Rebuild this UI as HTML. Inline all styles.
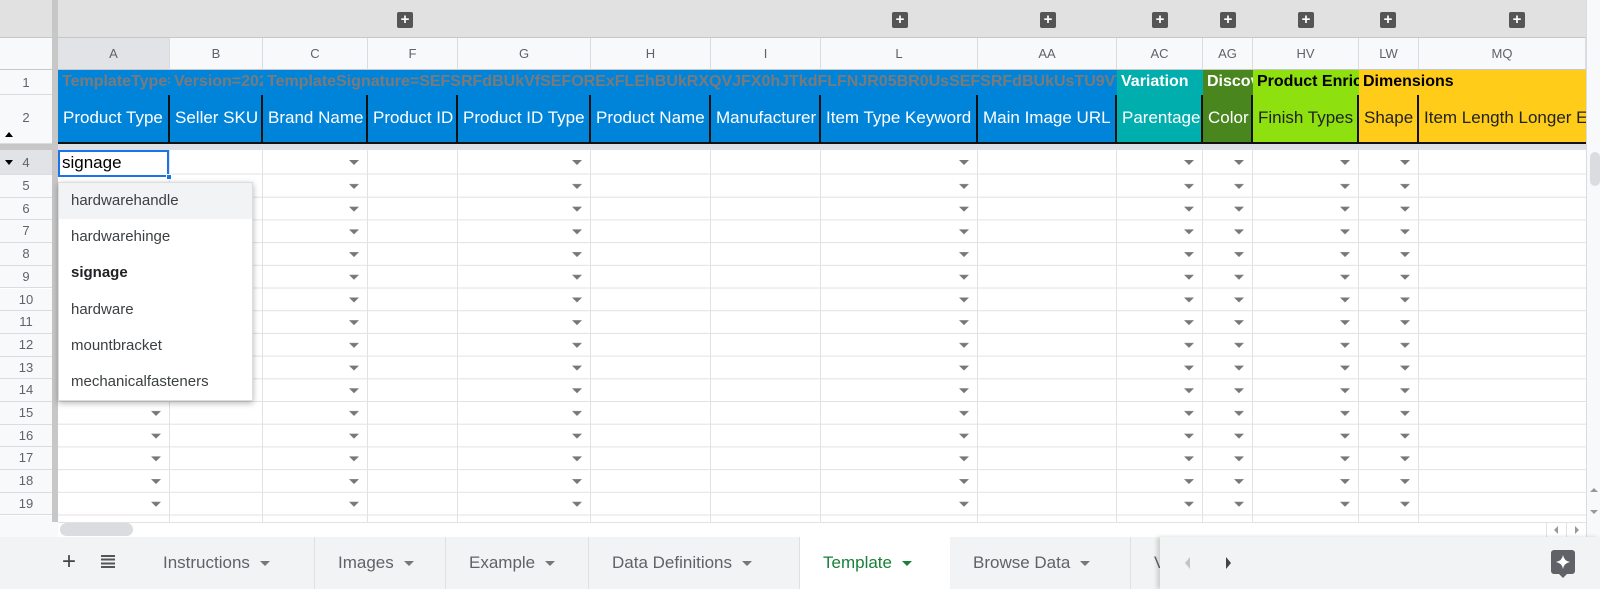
<!DOCTYPE html>
<html><head><meta charset="utf-8">
<style>
*{margin:0;padding:0;box-sizing:border-box}
body{width:1600px;height:589px;overflow:hidden;background:#fff;font-family:"Liberation Sans",Arial,sans-serif;position:relative}
.a{position:absolute}
.grp{left:0;top:0;width:1600px;height:38px;background:#e1e1e1;border-bottom:1px solid #c7c7c7}
.plus{width:16px;height:16px;background:#555;border-radius:2px;top:12px;color:#fff;font-size:15px;line-height:16px;text-align:center;font-weight:bold}
.ch{top:38px;height:32px;background:#f8f9fa;border-right:1px solid #dadce0;border-bottom:1px solid #c7c7c7;color:#5f6368;font-size:13px;text-align:center;line-height:32px}
.rh{left:0;width:52px;background:#f8f9fa;border-bottom:1px solid #dadce0;color:#5f6368;font-size:13px;text-align:center}
.r2{top:95px;height:49px;background:#0084da;color:#fff;font-size:17px;line-height:46px;padding-left:5px;border-right:2px solid #111;border-bottom:2px solid #111;white-space:nowrap;overflow:hidden}
.r1{top:70px;height:25px;font-size:16px;font-weight:bold;line-height:24px;padding-left:4px;white-space:nowrap;overflow:hidden}
.dd{left:58px;top:182px;width:195px;height:219px;background:#fff;box-shadow:0 2px 6px rgba(0,0,0,.3);border:1px solid #ddd}
.dd div{height:36.2px;line-height:36px;padding-left:12px;font-size:15px;color:#3c4043}
.tab{top:537px;height:52px;line-height:28px;padding-top:12px;font-size:17px;color:#5f6368;white-space:nowrap}
.tarr{display:inline-block;width:0;height:0;border-left:5px solid transparent;border-right:5px solid transparent;border-top:5px solid #777;vertical-align:middle;margin-left:10px}
</style></head><body>
<div class="a grp"></div>
<div class="a" style="left:52px;top:0;width:6px;height:150px;background:#c7c7c7"></div>
<div class="a plus" style="left:397px">+</div>
<div class="a plus" style="left:892px">+</div>
<div class="a plus" style="left:1040px">+</div>
<div class="a plus" style="left:1152px">+</div>
<div class="a plus" style="left:1220px">+</div>
<div class="a plus" style="left:1298px">+</div>
<div class="a plus" style="left:1380px">+</div>
<div class="a plus" style="left:1509px">+</div>

<div class="a" style="left:0;top:38px;width:52px;height:32px;background:#f8f9fa;border-bottom:1px solid #c7c7c7"></div>
<div class="a ch" style="left:58px;width:112px;background:#e1e3e6">A</div>
<div class="a ch" style="left:170px;width:93px">B</div>
<div class="a ch" style="left:263px;width:105px">C</div>
<div class="a ch" style="left:368px;width:90px">F</div>
<div class="a ch" style="left:458px;width:133px">G</div>
<div class="a ch" style="left:591px;width:120px">H</div>
<div class="a ch" style="left:711px;width:110px">I</div>
<div class="a ch" style="left:821px;width:157px">L</div>
<div class="a ch" style="left:978px;width:139px">AA</div>
<div class="a ch" style="left:1117px;width:86px">AC</div>
<div class="a ch" style="left:1203px;width:50px">AG</div>
<div class="a ch" style="left:1253px;width:106px">HV</div>
<div class="a ch" style="left:1359px;width:60px">LW</div>
<div class="a ch" style="left:1419px;width:167px">MQ</div>

<!-- grid -->
<svg class="a" style="left:0;top:0" width="1600" height="522">
<defs>
<pattern id="hl" patternUnits="userSpaceOnUse" x="0" y="175" width="1600" height="22.7"><rect x="0" y="21.7" width="1600" height="1" fill="#e2e2e2"/></pattern>
<pattern id="ar" patternUnits="userSpaceOnUse" x="0" y="175" width="10" height="22.7"><path d="M0 9 L10 9 L5 14Z" fill="#777"/></pattern>
</defs>
<rect x="58" y="173.5" width="1528" height="1" fill="#e2e2e2"/>
<rect x="58" y="175" width="1528" height="347" fill="url(#hl)"/>
<g fill="#e2e2e2">
<rect x="169" y="150" width="1" height="372"/><rect x="262" y="150" width="1" height="372"/><rect x="367" y="150" width="1" height="372"/><rect x="457" y="150" width="1" height="372"/><rect x="590" y="150" width="1" height="372"/><rect x="710" y="150" width="1" height="372"/><rect x="820" y="150" width="1" height="372"/><rect x="977" y="150" width="1" height="372"/><rect x="1116" y="150" width="1" height="372"/><rect x="1202" y="150" width="1" height="372"/><rect x="1252" y="150" width="1" height="372"/><rect x="1358" y="150" width="1" height="372"/><rect x="1418" y="150" width="1" height="372"/>
</g>
<g transform="translate(151,0)"><rect x="0" y="175" width="10" height="341" fill="url(#ar)"/></g>
<g transform="translate(349,0)"><path d="M0 160 L10 160 L5 165Z" fill="#777"/><rect x="0" y="175" width="10" height="341" fill="url(#ar)"/></g>
<g transform="translate(572,0)"><path d="M0 160 L10 160 L5 165Z" fill="#777"/><rect x="0" y="175" width="10" height="341" fill="url(#ar)"/></g>
<g transform="translate(959,0)"><path d="M0 160 L10 160 L5 165Z" fill="#777"/><rect x="0" y="175" width="10" height="341" fill="url(#ar)"/></g>
<g transform="translate(1184,0)"><path d="M0 160 L10 160 L5 165Z" fill="#777"/><rect x="0" y="175" width="10" height="341" fill="url(#ar)"/></g>
<g transform="translate(1234,0)"><path d="M0 160 L10 160 L5 165Z" fill="#777"/><rect x="0" y="175" width="10" height="341" fill="url(#ar)"/></g>
<g transform="translate(1340,0)"><path d="M0 160 L10 160 L5 165Z" fill="#777"/><rect x="0" y="175" width="10" height="341" fill="url(#ar)"/></g>
<g transform="translate(1400,0)"><path d="M0 160 L10 160 L5 165Z" fill="#777"/><rect x="0" y="175" width="10" height="341" fill="url(#ar)"/></g>
</svg>

<!-- row headers -->
<div class="a rh" style="top:70px;height:25px;line-height:25px">1</div>
<div class="a rh" style="top:95px;height:49px;line-height:46px">2</div>
<div class="a" style="left:5px;top:132px;border-left:4px solid transparent;border-right:4px solid transparent;border-bottom:5px solid #000"></div>
<div class="a" style="left:0;top:144px;width:1586px;height:6px;background:#dde1e6"></div>
<div class="a" style="left:0;top:144px;width:58px;height:6px;background:#c7c7c7"></div>
<div class="a rh" style="top:150px;height:25px;line-height:25px;background:#e1e3e6">4</div>
<div class="a" style="left:5px;top:160px;border-left:4px solid transparent;border-right:4px solid transparent;border-top:5px solid #000"></div>
<div class="a rh" style="top:175px;height:22.7px;line-height:22px">5</div>
<div class="a rh" style="top:197.7px;height:22.7px;line-height:22px">6</div>
<div class="a rh" style="top:220.4px;height:22.7px;line-height:22px">7</div>
<div class="a rh" style="top:243.1px;height:22.7px;line-height:22px">8</div>
<div class="a rh" style="top:265.8px;height:22.7px;line-height:22px">9</div>
<div class="a rh" style="top:288.5px;height:22.7px;line-height:22px">10</div>
<div class="a rh" style="top:311.2px;height:22.7px;line-height:22px">11</div>
<div class="a rh" style="top:333.9px;height:22.7px;line-height:22px">12</div>
<div class="a rh" style="top:356.6px;height:22.7px;line-height:22px">13</div>
<div class="a rh" style="top:379.3px;height:22.7px;line-height:22px">14</div>
<div class="a rh" style="top:402px;height:22.7px;line-height:22px">15</div>
<div class="a rh" style="top:424.7px;height:22.7px;line-height:22px">16</div>
<div class="a rh" style="top:447.4px;height:22.7px;line-height:22px">17</div>
<div class="a rh" style="top:470.1px;height:22.7px;line-height:22px">18</div>
<div class="a rh" style="top:492.8px;height:22.7px;line-height:22px">19</div>
<div class="a rh" style="top:515.5px;height:7px"></div>
<div class="a" style="left:52px;top:150px;width:6px;height:372px;background:#c7c7c7"></div>

<!-- row 1 -->
<div class="a" style="left:58px;top:70px;width:1059px;height:25px;background:#0084da"></div>
<div class="a r1" style="left:58px;width:112px;color:#7a7a7a">TemplateType=homeimprovement</div>
<div class="a r1" style="left:170px;width:93px;color:#7a7a7a">Version=2020.0813</div>
<div class="a r1" style="left:263px;width:854px;color:#7a7a7a">TemplateSignature=SEFSRFdBUkVfSEFORExFLEhBUkRXQVJFX0hJTkdFLFNJR05BR0UsSEFSRFdBUkUsTU9VTlRfQlJBQ0tFVA==</div>
<div class="a r1" style="left:1117px;width:86px;background:#00aead;color:#fff">Variation</div>
<div class="a r1" style="left:1203px;width:50px;background:#4a861e;color:#fff">Discovery</div>
<div class="a r1" style="left:1253px;width:106px;background:#8ee00e;color:#000">Product Enrichment</div>
<div class="a r1" style="left:1359px;width:227px;background:#ffcc1a;color:#000">Dimensions</div>

<!-- row 2 -->
<div class="a r2" style="left:58px;width:112px">Product Type</div>
<div class="a r2" style="left:170px;width:93px">Seller SKU</div>
<div class="a r2" style="left:263px;width:105px">Brand Name</div>
<div class="a r2" style="left:368px;width:90px">Product ID</div>
<div class="a r2" style="left:458px;width:133px">Product ID Type</div>
<div class="a r2" style="left:591px;width:120px">Product Name</div>
<div class="a r2" style="left:711px;width:110px">Manufacturer</div>
<div class="a r2" style="left:821px;width:157px">Item Type Keyword</div>
<div class="a r2" style="left:978px;width:139px">Main Image URL</div>
<div class="a r2" style="left:1117px;width:86px;background:#00aead">Parentage</div>
<div class="a r2" style="left:1203px;width:50px;background:#4a861e">Color</div>
<div class="a r2" style="left:1253px;width:106px;background:#8ee00e;color:#222">Finish Types</div>
<div class="a r2" style="left:1359px;width:60px;background:#ffcc1a;color:#222">Shape</div>
<div class="a r2" style="left:1419px;width:167px;background:#ffcc1a;color:#222;border-right:none">Item Length Longer Edge</div>

<!-- selected cell -->
<div class="a" style="left:58px;top:150px;width:111px;height:27px;border:2px solid #1a73e8;background:#fff;font-size:17px;line-height:22px;padding-left:2px;color:#000">signage</div>
<div class="a" style="left:166px;top:174px;width:6px;height:6px;background:#1a73e8;border:1px solid #fff"></div>

<div class="a dd">
<div style="background:#f1f3f4">hardwarehandle</div>
<div>hardwarehinge</div>
<div style="font-weight:bold;color:#202124">signage</div>
<div>hardware</div>
<div>mountbracket</div>
<div>mechanicalfasteners</div>
</div>

<!-- scrollbars -->
<div class="a" style="left:1586px;top:0;width:14px;height:537px;background:#f8f9fa;border-left:1px solid #dadce0"></div>
<div class="a" style="left:1590px;top:152px;width:10px;height:34px;background:#dadce0;border-radius:5px"></div>
<div class="a" style="left:1590px;top:488px;border-left:4px solid transparent;border-right:4px solid transparent;border-bottom:4px solid #999"></div>
<div class="a" style="left:1590px;top:510px;border-left:4px solid transparent;border-right:4px solid transparent;border-top:4px solid #999"></div>
<div class="a" style="left:0;top:522px;width:1586px;height:15px;background:#fff;border-top:1px solid #e2e2e2"></div>
<div class="a" style="left:0;top:522px;width:58px;height:15px;background:#f8f9fa"></div>
<div class="a" style="left:60px;top:523px;width:73px;height:13px;background:#dadce0;border-radius:7px"></div>
<div class="a" style="left:1546px;top:523px;width:1px;height:14px;background:#e2e2e2"></div>
<div class="a" style="left:1566px;top:523px;width:1px;height:14px;background:#e2e2e2"></div>
<div class="a" style="left:1554px;top:526px;border-top:4px solid transparent;border-bottom:4px solid transparent;border-right:4px solid #999"></div>
<div class="a" style="left:1575px;top:526px;border-top:4px solid transparent;border-bottom:4px solid transparent;border-left:4px solid #999"></div>

<!-- tab bar -->
<div class="a" style="left:0;top:537px;width:1600px;height:52px;background:#f1f3f4"></div>
<div class="a" style="left:62px;top:537px;font-size:24px;line-height:26px;padding-top:12px;color:#444">+</div>
<div class="a" style="left:101px;top:555px;width:14px;height:13px;background:repeating-linear-gradient(#555 0 2px,transparent 2px 3.7px)"></div>
<div class="a tab" style="left:140px;width:175px;padding-left:23px;border-right:1px solid #e0e0e0">Instructions<span class="tarr"></span></div>
<div class="a tab" style="left:315px;width:131px;padding-left:23px;border-right:1px solid #e0e0e0">Images<span class="tarr"></span></div>
<div class="a tab" style="left:446px;width:143px;padding-left:23px;border-right:1px solid #e0e0e0">Example<span class="tarr"></span></div>
<div class="a tab" style="left:589px;width:211px;padding-left:23px;border-right:1px solid #e0e0e0">Data Definitions<span class="tarr"></span></div>
<div class="a tab" style="left:800px;width:150px;padding-left:23px;background:#fff;color:#188038">Template<span class="tarr" style="border-top-color:#188038"></span></div>
<div class="a tab" style="left:950px;width:181px;padding-left:23px;border-right:1px solid #e0e0e0">Browse Data<span class="tarr"></span></div>
<div class="a tab" style="left:1131px;width:29px;padding-left:23px;overflow:hidden">Valid Values</div>
<div class="a" style="left:1160px;top:537px;width:440px;height:52px;background:#f1f3f4;box-shadow:-3px 0 4px rgba(0,0,0,.15)"></div>
<div class="a" style="left:1185px;top:557px;border-top:6px solid transparent;border-bottom:6px solid transparent;border-right:5px solid #c4c4c4"></div>
<div class="a" style="left:1226px;top:557px;border-top:6px solid transparent;border-bottom:6px solid transparent;border-left:5px solid #444"></div>
<div class="a" style="left:1551px;top:550px;width:24px;height:24px;background:#5f6368;border-radius:3px"></div>
<div class="a" style="left:1559px;top:574px;border-left:4px solid transparent;border-right:4px solid transparent;border-top:4px solid #5f6368"></div>
<svg class="a" style="left:1555px;top:554px" width="16" height="16" viewBox="0 0 16 16"><path d="M8 1 Q9 7 15 8 Q9 9 8 15 Q7 9 1 8 Q7 7 8 1Z" fill="#fff"/></svg>
</body></html>
